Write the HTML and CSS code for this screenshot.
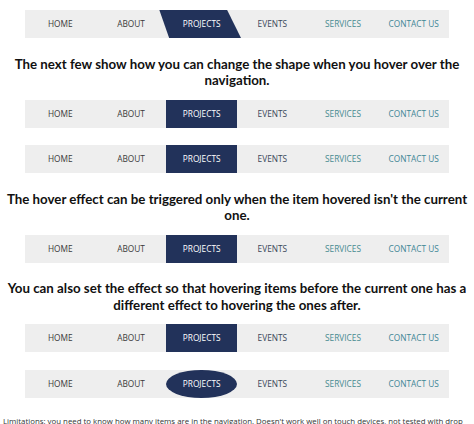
FILE: index.html
```html
<!DOCTYPE html>
<html lang="en">
<head>
  <meta charset="UTF-8">
  <meta name="viewport" content="width=device-width, initial-scale=1.0">
  <title>Navigation Hover Shapes</title>
  <link rel="stylesheet" href="styles.css">
</head>
<body>

<nav class="nav nav-skew">
  <ul>
    <li><a href="#">Home</a></li>
    <li><a href="#">About</a></li>
    <li class="current"><a href="#">Projects</a></li>
    <li><a href="#">Events</a></li>
    <li><a href="#">Services</a></li>
    <li><a href="#">Contact Us</a></li>
  </ul>
</nav>

<h2>The next few show how you can change the shape when you hover over the navigation.</h2>

<nav class="nav">
  <ul>
    <li><a href="#">Home</a></li>
    <li><a href="#">About</a></li>
    <li class="current"><a href="#">Projects</a></li>
    <li><a href="#">Events</a></li>
    <li><a href="#">Services</a></li>
    <li><a href="#">Contact Us</a></li>
  </ul>
</nav>

<nav class="nav">
  <ul>
    <li><a href="#">Home</a></li>
    <li><a href="#">About</a></li>
    <li class="current"><a href="#">Projects</a></li>
    <li><a href="#">Events</a></li>
    <li><a href="#">Services</a></li>
    <li><a href="#">Contact Us</a></li>
  </ul>
</nav>

<h2>The hover effect can be triggered only when the item hovered isn't the current one.</h2>

<nav class="nav">
  <ul>
    <li><a href="#">Home</a></li>
    <li><a href="#">About</a></li>
    <li class="current"><a href="#">Projects</a></li>
    <li><a href="#">Events</a></li>
    <li><a href="#">Services</a></li>
    <li><a href="#">Contact Us</a></li>
  </ul>
</nav>

<h2>You can also set the effect so that hovering items before the current one has a different effect to hovering the ones after.</h2>

<nav class="nav">
  <ul>
    <li><a href="#">Home</a></li>
    <li><a href="#">About</a></li>
    <li class="current"><a href="#">Projects</a></li>
    <li><a href="#">Events</a></li>
    <li><a href="#">Services</a></li>
    <li><a href="#">Contact Us</a></li>
  </ul>
</nav>

<nav class="nav nav-oval">
  <ul>
    <li><a href="#">Home</a></li>
    <li><a href="#">About</a></li>
    <li class="current"><a href="#">Projects</a></li>
    <li><a href="#">Events</a></li>
    <li><a href="#">Services</a></li>
    <li><a href="#">Contact Us</a></li>
  </ul>
</nav>

<p class="notes">Limitations: you need to know how many items are in the navigation. Doesn't work well on touch devices, not tested with drop down menus.</p>

</body>
</html>
```

FILE: styles.css
```css
body {
  margin: 0;
  padding: 10px 3px 0;
  font-family: "Open Sans", sans-serif;
  color: #111;
  background-color: #fff;
}

/* Navigation bars */
.nav {
  width: 424px;
  margin: 0 auto 17.5px;
  background-color: #eeeeee;
}

.nav ul {
  display: flex;
  list-style: none;
  margin: 0;
  padding: 0;
}

.nav li {
  flex: 1;
  position: relative;
}

.nav a {
  position: relative;
  display: block;
  height: 28px;
  line-height: 28px;
  text-align: center;
  font-size: 8.3px;
  text-transform: uppercase;
  text-decoration: none;
  color: #3a3a3a;
}

.nav li:nth-child(4) a {
  color: #3a4658;
}

.nav li:nth-child(5) a {
  color: #468a90;
}

.nav li:nth-child(6) a {
  color: #3e8696;
}

.nav .current a,
.nav li.current:nth-child(n) a {
  color: #fff;
  background-color: #22325a;
}

/* Slanted current item */
.nav-skew .current::before {
  content: "";
  position: absolute;
  top: 0;
  bottom: 0;
  left: -7px;
  right: -4px;
  background-color: #22325a;
  clip-path: polygon(0 0, 83% 0, 100% 100%, 12% 100%);
}

.nav-skew li.current:nth-child(n) a {
  background-color: transparent;
}

/* Oval current item */
.nav-oval li.current:nth-child(n) a {
  border-radius: 50%;
}

h2 {
  margin: 0 0 11px;
  font-family: "Lato", sans-serif;
  font-size: 13.3px;
  line-height: 16.5px;
  font-weight: bold;
  text-align: center;
}

.notes {
  margin: 0;
  font-size: 7.85px;
  line-height: 12px;
  color: #333;
}
```
